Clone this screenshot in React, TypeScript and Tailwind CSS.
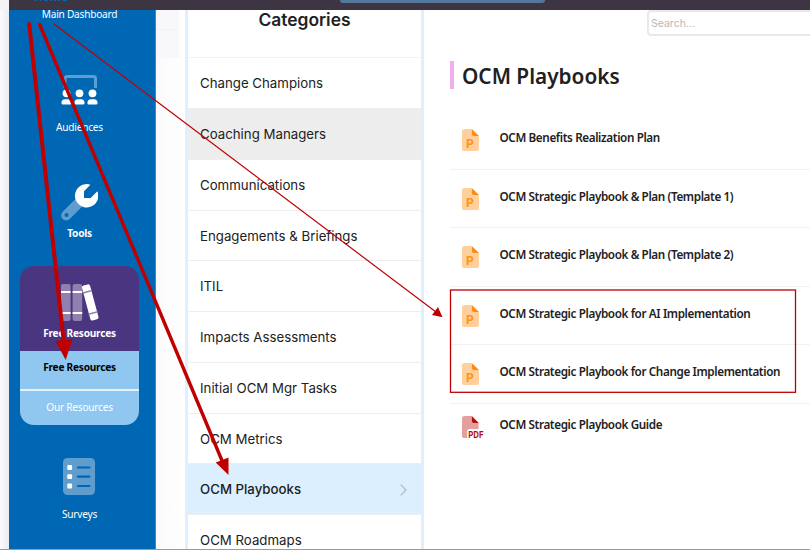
import { useState } from 'react';

const categories = [
    'Change Champions',
    'Coaching Managers',
    'Communications',
    'Engagements & Briefings',
    'ITIL',
    'Impacts Assessments',
    'Initial OCM Mgr Tasks',
    'OCM Metrics',
    'OCM Playbooks',
    'OCM Roadmaps',
];

const playbooks = [
    { title: 'OCM Benefits Realization Plan', type: 'ppt' },
    { title: 'OCM Strategic Playbook & Plan (Template 1)', type: 'ppt' },
    { title: 'OCM Strategic Playbook & Plan (Template 2)', type: 'ppt' },
    { title: 'OCM Strategic Playbook for AI Implementation', type: 'ppt' },
    { title: 'OCM Strategic Playbook for Change Implementation', type: 'ppt' },
    { title: 'OCM Strategic Playbook Guide', type: 'pdf' },
];

function AudiencesIcon() {
    return (
        <svg className="w-[37px] h-[30px]" viewBox="0 0 37 30" fill="#fff">
            <path d="M4 13V3.5a2 2 0 0 1 2-2h26.5a2 2 0 0 1 2 2V13" fill="none" stroke="#5f9dce" strokeWidth="3" />
            {[5.5, 18.5, 31.5].map((x) => (
                <g key={x}>
                    <circle cx={x} cy="18.3" r="3.9" />
                    <path d={`M${x - 3.5} 29.6a1.6 1.6 0 0 1-1.6-1.6a3.8 3.8 0 0 1 3.8-3.8h2.6a3.8 3.8 0 0 1 3.8 3.8a1.6 1.6 0 0 1-1.6 1.6z`} />
                </g>
            ))}
        </svg>
    );
}

function ToolsIcon() {
    return (
        <svg className="w-[37px] h-[37px]" viewBox="0 0 37 37">
            <path d="M5.2 31.4 17 19.6" stroke="#5f9dce" strokeWidth="10" strokeLinecap="round" />
            <circle cx="5.5" cy="31" r="2" fill="#0067b4" />
            <path d="M29.4.7A11.7 11.7 0 1 0 36.4 7.2L29.6 14H23V7.2z" fill="#fff" />
        </svg>
    );
}

function BooksIcon() {
    return (
        <svg className="w-[38px] h-[38px]" viewBox="0 0 38 38">
            <rect x="0" y="0" width="9.6" height="37" rx="2" fill="#8f80ae" />
            <rect x="11.6" y="0" width="9.6" height="37" rx="2" fill="#8f80ae" />
            <path d="M0 8h9.6M11.6 8h9.6M0 29h9.6M11.6 29h9.6" stroke="#fff" strokeWidth="1.8" />
            <g transform="rotate(-15 21 2)">
                <rect x="20.5" y="2" width="8.4" height="36" rx="2" fill="#fff" />
                <path d="M20 9h9.5M20 31h9.5" stroke="#8f80ae" strokeWidth="1.6" />
            </g>
        </svg>
    );
}

function SurveysIcon() {
    return (
        <svg className="w-8 h-[37px]" viewBox="0 0 32 37">
            <rect width="32" height="37" rx="4.5" fill="#5f9dce" />
            {[9.5, 18.6, 28].map((y) => (
                <g key={y}>
                    <rect x="4.3" y={y - 2.4} width="4.8" height="4.8" rx="1" fill="#fff" />
                    <path d={`M15 ${y}h11.5`} stroke="#0067b4" strokeWidth="2.2" strokeLinecap="round" />
                </g>
            ))}
        </svg>
    );
}

function PptIcon() {
    return (
        <svg className="w-[17px] h-[22px]" viewBox="0 0 17 22">
            <path d="M2.6 0H9.8v5.2A1.8 1.8 0 0 0 11.6 7H17v12.4a2.6 2.6 0 0 1-2.6 2.6H2.6A2.6 2.6 0 0 1 0 19.4V2.6A2.6 2.6 0 0 1 2.6 0z" fill="#ffd09c" />
            <path d="M9.8 0 17 7h-5.4a1.8 1.8 0 0 1-1.8-1.8z" fill="#ff8c12" />
            <text x="4" y="19" fill="#ff9416" className="font-[Inter,sans-serif] text-[12px] font-bold">P</text>
        </svg>
    );
}

function PdfIcon() {
    return (
        <svg className="w-[22px] h-[23px]" viewBox="0 0 22 23">
            <path d="M2.6 0H9.8v5.2A1.8 1.8 0 0 0 11.6 7h4.9v6H7.6A2.4 2.4 0 0 0 5.2 15.4v6.6H2.6A2.6 2.6 0 0 1 0 19.4V2.6A2.6 2.6 0 0 1 2.6 0z" fill="#e3a09f" />
            <path d="M9.8 0 16.8 7h-5.2a1.8 1.8 0 0 1-1.8-1.8z" fill="#b80d0d" />
            <text x="6.3" y="22" textLength="15.3" lengthAdjust="spacingAndGlyphs" fill="#b80d0d" className="font-[Inter,sans-serif] text-[9.5px] font-bold">PDF</text>
        </svg>
    );
}

function Annotations() {
    return (
        <svg className="absolute inset-0 w-[810px] h-[550px] pointer-events-none" viewBox="0 0 810 550" stroke="#c00000" fill="none">
            <path d="M29.2 24 64 344" strokeWidth="4" strokeLinecap="round" />
            <path d="M55.5 341 72.5 339 65.7 360z" fill="#c00000" stroke="none" />
            <path d="M39.7 24.5 223 463" strokeWidth="3.4" strokeLinecap="round" />
            <path d="M215.7 462.5 228.5 457.5 228.5 475z" fill="#c00000" stroke="none" />
            <path d="M54 24 436 312" strokeWidth="1.2" strokeLinecap="round" />
            <path d="M432 315 438 307 442.5 317.2z" fill="#c00000" stroke="none" />
            <rect x="450.5" y="290" width="345" height="102.3" strokeWidth="1.3" />
        </svg>
    );
}

export default function App() {
    const [category, setCategory] = useState('OCM Playbooks');

    return (
        <div className="relative w-[810px] h-[550px] overflow-hidden bg-white flex flex-col font-['Noto_Sans',sans-serif] text-[#212121]">
            <header className="h-[10px] shrink-0 flex">
                <div className="w-[9px] bg-[#f3f3f6]" />
                <div className="flex-1 flex bg-[#3d3541] overflow-hidden">
                    <div className="w-[331px] h-[10px] pl-[25px] overflow-hidden">
                        <div className="-mt-[12px] text-[11.5px] leading-[18px] font-bold text-[#0067b4]">Home</div>
                    </div>
                    <div className="w-[205px] h-[3px] rounded-b bg-[#54789b]" />
                </div>
            </header>

            <div className="flex flex-1 min-h-0 overflow-hidden">
                <div className="w-[9px] shrink-0 bg-linear-to-r from-[#fbfbfd] to-[#ececf1]" />
                <nav className="w-[147px] shrink-0 bg-[#0067b4] border-r border-[#3b87c2] text-white text-[10.1px] tracking-[-0.22px] leading-[14px] flex flex-col items-center pr-[5px]">
                    <div className="-mt-[3px] h-[14px]">Main Dashboard</div>
                    <div className="mt-[54px] flex flex-col items-center">
                        <AudiencesIcon />
                        <div className="mt-[15px]">Audiences</div>
                    </div>
                    <div className="mt-[50px] flex flex-col items-center">
                        <ToolsIcon />
                        <div className="mt-[5px] font-bold">Tools</div>
                    </div>
                    <div className="mt-[26px] w-[119px] h-[159px] shrink-0 rounded-[14px] overflow-hidden flex flex-col text-center font-bold">
                        <div className="h-[85px] shrink-0 bg-[#4a3580] flex flex-col items-center pt-[18px]">
                            <BooksIcon />
                            <div className="mt-[4px]">Free Resources</div>
                        </div>
                        <div className="h-[38px] shrink-0 bg-[#8fc7f0] text-black pt-[9px]">Free Resources</div>
                        <div className="h-[36px] border-t-2 border-[#e4f2fc] bg-[#8fc7f0] font-normal pt-[9px]">Our Resources</div>
                    </div>
                    <div className="mt-[33px] flex flex-col items-center">
                        <SurveysIcon />
                        <div className="mt-3">Surveys</div>
                    </div>
                </nav>

                <div className="w-[29px] shrink-0 bg-linear-to-r from-[#fafafc] to-white">
                    <div className="w-[23px] h-[48px] bg-[#f8f8fb]">
                        <div className="h-5 border-b border-[#f2f2f6]" />
                    </div>
                </div>

                <section className="w-[239px] shrink-0 border-x-[3px] border-[#def0ff] font-[Inter,sans-serif]">
                    <h2 className="h-[48.3px] border-b border-[#f2f2f2] text-center text-[17.4px] leading-[20px] font-semibold">Categories</h2>
                    <ul>
                        {categories.map((name) => (
                            <li
                                key={name}
                                onClick={() => setCategory(name)}
                                className={`h-[50.75px] flex items-center justify-between pl-3 pr-[14px] pt-[2.5px] border-b border-[#eeeeee] text-[13.25px] ${
                                    name === category ? 'bg-[#dcefff] font-medium' : name === 'Coaching Managers' ? 'bg-[#ededed]' : ''
                                }`}
                            >
                                <span>{name}</span>
                                {name === category && (
                                    <svg className="w-[7px] h-3" viewBox="0 0 7 12" fill="none" stroke="#b0b7bd" strokeWidth="1.2">
                                        <path d="m.7.7 5.3 5.3-5.3 5.3" />
                                    </svg>
                                )}
                            </li>
                        ))}
                    </ul>
                </section>

                <main className="flex-1 min-w-0 pl-[26px]">
                    <div className="flex justify-end">
                        <input
                            className="w-[163px] h-[26px] shrink-0 border-2 border-r-0 border-[#e9e9ed] rounded-l-[4px] px-[2px] pt-px text-[10.5px] font-[Inter,sans-serif] placeholder:text-[#b8b8b8]"
                            placeholder="Search..."
                        />
                    </div>
                    <h1 className="mt-[25px] h-7 border-l-4 border-[#efaeec] pl-2 text-[20.8px] leading-[31px] font-semibold whitespace-nowrap">OCM Playbooks</h1>
                    <ul className="mt-[22px]">
                        {playbooks.map((item) => (
                            <li
                                key={item.title}
                                className={`flex items-start pl-3 ${
                                    item.type === 'pdf' ? 'pt-[12px]' : 'h-[58.6px] pt-[18px] border-b border-[#f2f2f2]'
                                }`}
                            >
                                <div className="w-[37.5px] shrink-0">{item.type === 'pdf' ? <PdfIcon /> : <PptIcon />}</div>
                                <span className="-mt-px text-[11.7px] leading-[18px] font-semibold tracking-[-0.38px] whitespace-nowrap">{item.title}</span>
                            </li>
                        ))}
                    </ul>
                </main>
            </div>
            <div className="h-px shrink-0 bg-[#9a9a9a]" />
            <Annotations />
        </div>
    );
}
